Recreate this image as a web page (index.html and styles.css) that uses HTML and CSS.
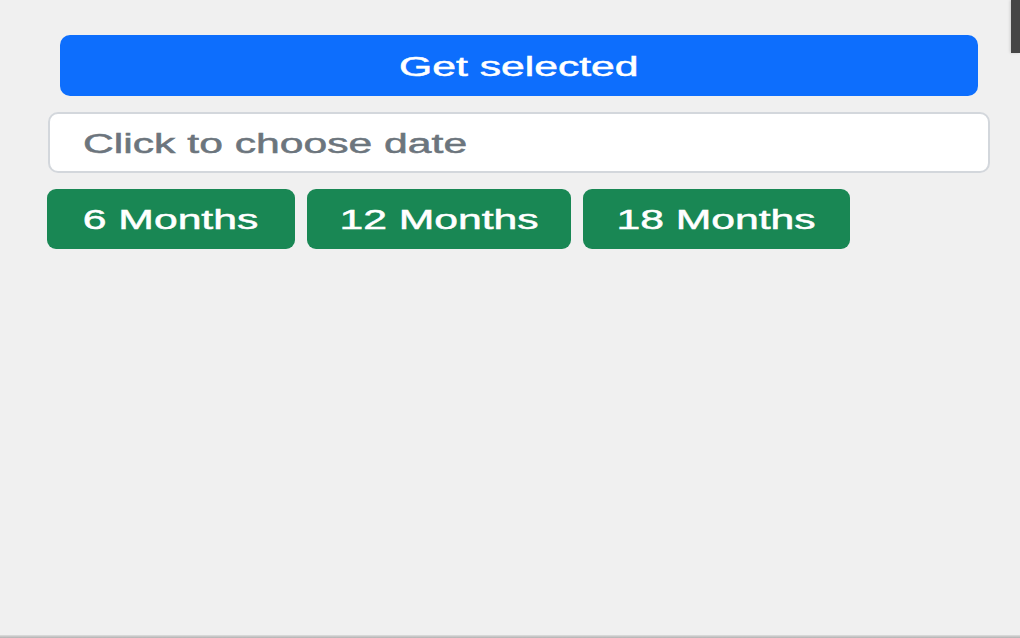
FILE: index.html
```html
<!DOCTYPE html>
<html lang="en">
<head>
<meta charset="utf-8">
<title>Date picker</title>
<link rel="stylesheet" href="styles.css">
</head>
<body>
<div class="page">
  <button class="btn btn-primary"><span class="txt">Get selected</span></button>
  <div class="field" role="textbox"><span class="txt placeholder">Click to choose date</span></div>
  <div class="row">
    <button class="btn btn-success w6"><span class="txt">6 Months</span></button>
    <button class="btn btn-success w12"><span class="txt">12 Months</span></button>
    <button class="btn btn-success w18"><span class="txt">18 Months</span></button>
  </div>
</div>
<div class="thumb"></div>
<div class="bottom-edge"></div>
</body>
</html>
```
FILE: styles.css
```css
html, body {
  margin: 0;
  height: 100%;
}
body {
  background: #f0f0f0;
  font-family: "Liberation Sans", Arial, sans-serif;
  font-size: 27px;
  overflow: hidden;
  position: relative;
}
.page {
  display: flex;
  flex-direction: column;
  padding: 35px 30px 0 48px;
  gap: 16px;
}
.txt {
  display: inline-block;
  transform: scaleX(1.58);
  white-space: nowrap;
  -webkit-text-stroke: 0.5px currentColor;
}
.btn {
  font: inherit;
  border: none;
  color: #fff;
  display: flex;
  align-items: center;
  justify-content: center;
  padding: 3px 0 0;
  cursor: pointer;
}
.btn-primary {
  background: #0d6efd;
  height: 61px;
  margin: 0 12px;
  border-radius: 10px;
}
.field {
  height: 61px;
  box-sizing: border-box;
  background: #fff;
  border: 2px solid #d3d7dc;
  border-radius: 10px;
  display: flex;
  align-items: center;
  padding: 4px 0 0 33px;
}
.placeholder {
  color: #6c757d;
  transform-origin: left center;
}
.row {
  display: flex;
  gap: 12px;
  margin-left: -1px;
}
.btn-success {
  background: #198754;
  height: 60px;
  border-radius: 9px;
}
.w6 { width: 248px; }
.w12 { width: 264px; }
.w18 { width: 267px; }
.thumb {
  position: absolute;
  top: 0;
  right: 0;
  width: 9px;
  height: 53px;
  background: #464646;
  box-shadow: -1px 0 3px rgba(0,0,0,0.15);
}
.bottom-edge {
  position: absolute;
  left: 0;
  right: 0;
  bottom: 0;
  height: 3px;
  background: linear-gradient(#dedede, #b2b2b2);
}
```
